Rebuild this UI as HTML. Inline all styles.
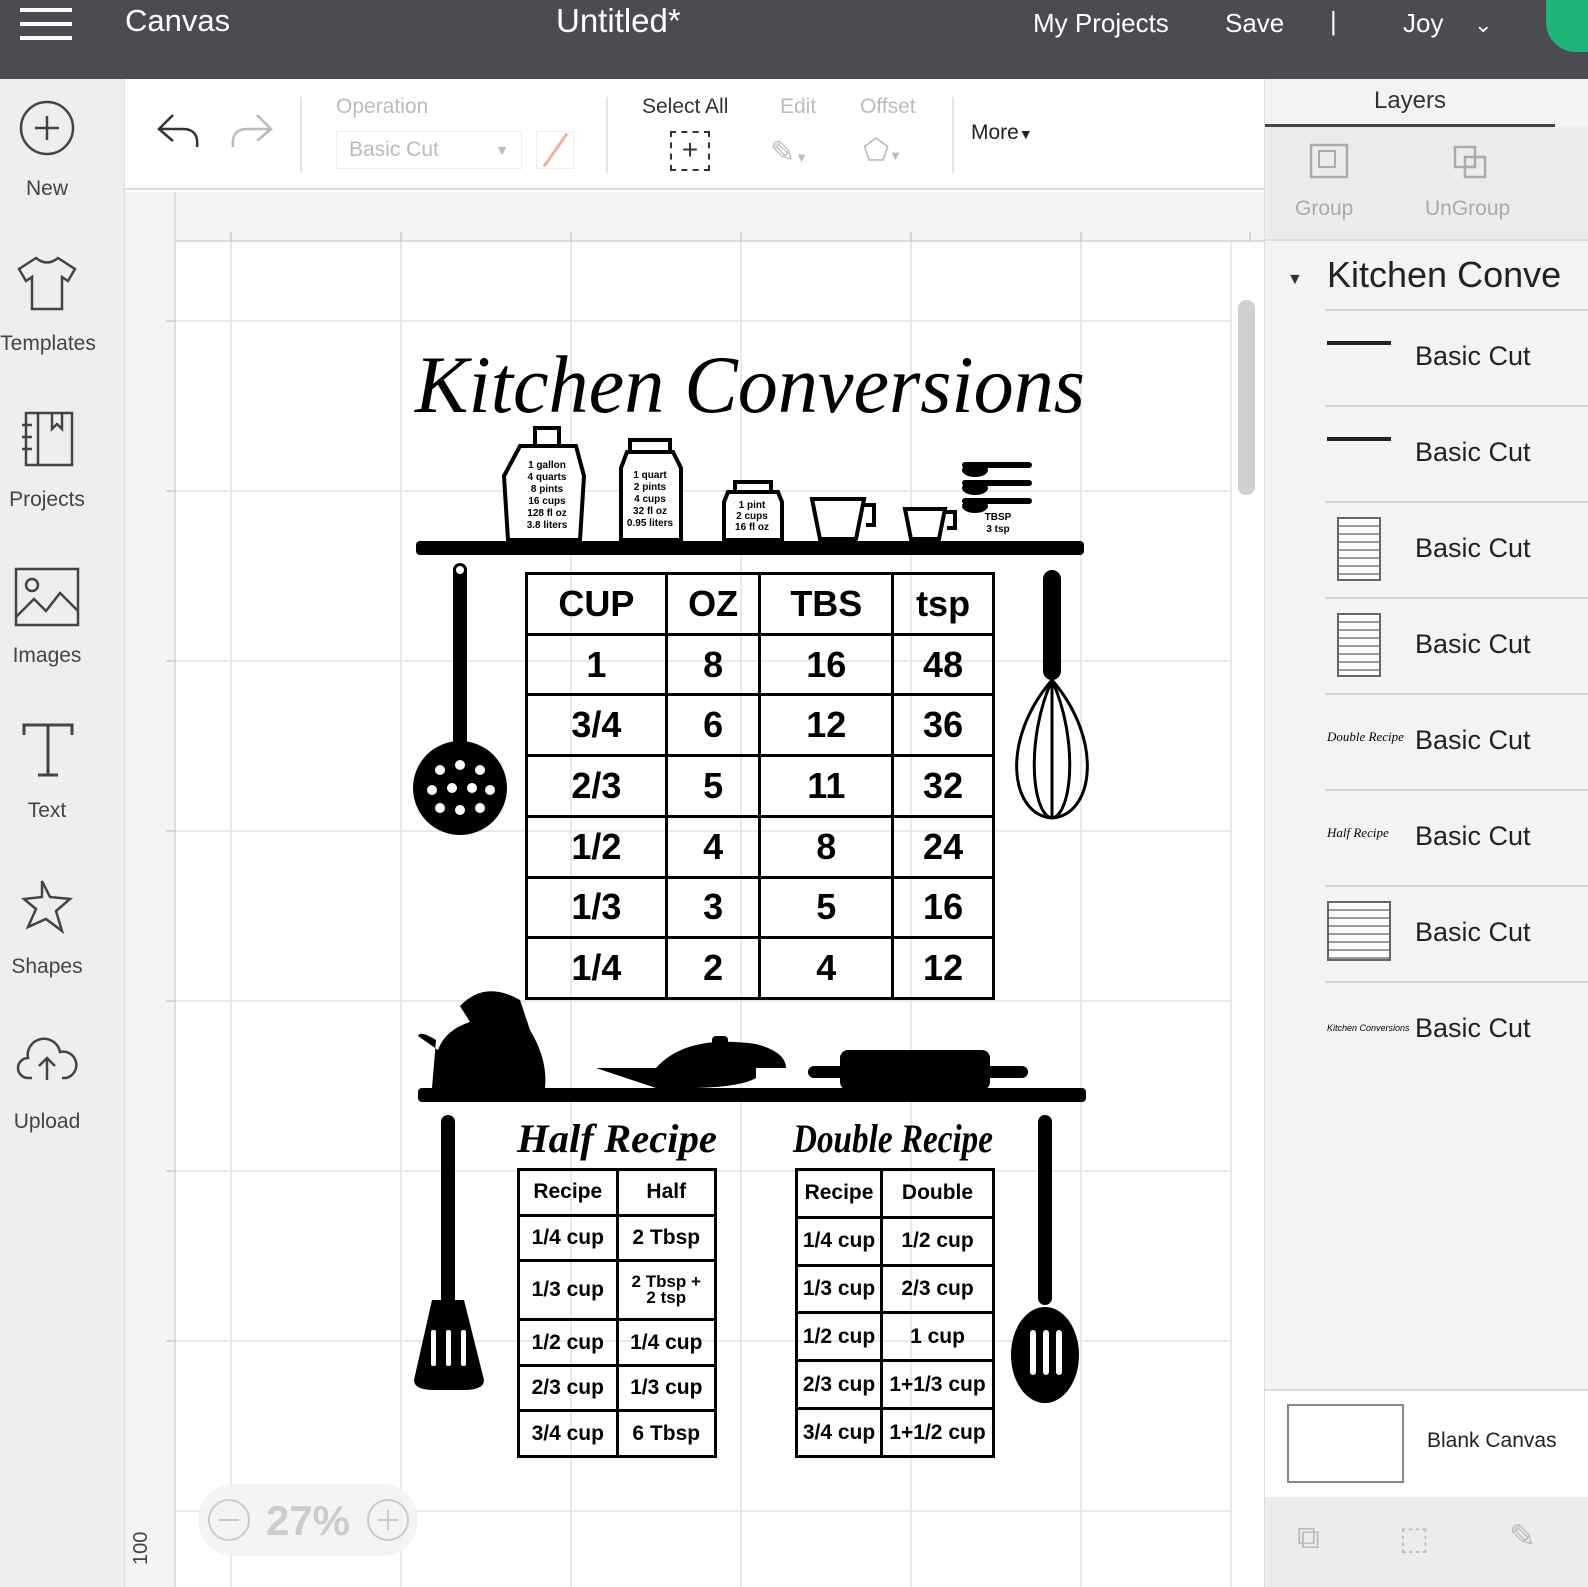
<!DOCTYPE html>
<html><head><meta charset="utf-8"><style>
*{margin:0;padding:0;box-sizing:border-box}
body{width:1588px;height:1587px;overflow:hidden;font-family:"Liberation Sans",sans-serif;background:#fff;position:relative}
.abs{position:absolute}
#top{left:0;top:0;width:1588px;height:79px;background:#4b4c51;color:#fff}
#top div{position:absolute;top:6px;font-size:30px}
#side{left:0;top:79px;width:125px;height:1508px;background:#eeeeef;border-right:1px solid #ddd}
.si{position:absolute;left:0;width:125px;text-align:center;color:#444;font-size:21px}
#tool{left:125px;top:79px;width:1139px;height:111px;background:#fff;border-bottom:2px solid #ddd}
#right{left:1264px;top:79px;width:324px;height:1508px;background:#f3f3f3;border-left:1px solid #ddd}
table{border-collapse:collapse;position:absolute;font-weight:bold;color:#000;text-align:center}
td{border:3px solid #000}
.lay{position:absolute;left:60px;width:264px;height:96px;border-bottom:2px solid #d6d6d6}
.lay span{position:absolute;left:90px;top:30px;font-size:27px;color:#222}
</style></head><body>
<div id="top" class="abs">
 <div style="left:20px;top:8px;width:52px"><div style="position:static;height:4px;background:#fff;margin-bottom:10px"></div><div style="position:static;height:4px;background:#fff;margin-bottom:10px"></div><div style="position:static;height:4px;background:#fff"></div></div>
 <div style="left:125px;top:3px;font-size:31px">Canvas</div>
 <div style="left:556px;top:2px;font-size:33px">Untitled*</div>
 <div style="left:1033px;font-size:26px;top:8px">My Projects</div>
 <div style="left:1225px;font-size:26px;top:8px">Save</div>
 <div style="left:1330px;font-size:26px;top:6px">|</div>
 <div style="left:1403px;font-size:26px;top:8px">Joy</div>
 <div style="left:1474px;top:12px;font-size:22px">&#8964;</div>
 <div style="left:1546px;top:0;width:60px;height:52px;border-radius:0 0 0 30px;background:#1fb57a"></div>
</div>
<div id="side" class="abs">
 <svg class="abs" style="left:18px;top:20px" width="58" height="58"><circle cx="29" cy="29" r="26" fill="none" stroke="#444" stroke-width="2.5"/><path d="M29 17v24M17 29h24" stroke="#444" stroke-width="2.5"/></svg>
 <div class="si" style="top:98px;width:94px">New</div>
 <svg class="abs" style="left:16px;top:176px" width="62" height="58"><path d="M20 3 L3 14 10 26 16 22 16 54 46 54 46 22 52 26 59 14 42 3 Q31 12 20 3Z" fill="none" stroke="#444" stroke-width="2.5"/></svg>
 <div class="si" style="top:253px;width:96px">Templates</div>
 <svg class="abs" style="left:20px;top:332px" width="56" height="56"><rect x="6" y="2" width="46" height="52" fill="none" stroke="#444" stroke-width="2.5"/><path d="M18 2v52M2 14h10M2 26h10M2 38h10M32 2v16l5-5 5 5V2" fill="none" stroke="#444" stroke-width="2.5"/></svg>
 <div class="si" style="top:409px;width:94px">Projects</div>
 <svg class="abs" style="left:14px;top:488px" width="66" height="60"><rect x="2" y="2" width="62" height="56" fill="none" stroke="#444" stroke-width="2.5"/><circle cx="18" cy="18" r="6" fill="none" stroke="#444" stroke-width="2.5"/><path d="M2 50 20 32 32 44 46 26 64 44" fill="none" stroke="#444" stroke-width="2.5"/></svg>
 <div class="si" style="top:565px;width:94px">Images</div>
 <svg class="abs" style="left:20px;top:642px" width="56" height="60"><path d="M4 14V4h48v10M28 4v50M18 54h20" fill="none" stroke="#444" stroke-width="3"/></svg>
 <div class="si" style="top:720px;width:94px">Text</div>
 <svg class="abs" style="left:20px;top:798px" width="56" height="60"><path d="M22 4 30 20 50 22 36 34 42 54 26 42 8 50 16 32 4 22 22 20Z" fill="none" stroke="#444" stroke-width="2.5"/></svg>
 <div class="si" style="top:876px;width:94px">Shapes</div>
 <svg class="abs" style="left:16px;top:955px" width="62" height="50"><path d="M16 44H12A10 10 0 0 1 12 24 16 16 0 0 1 44 18 12 12 0 0 1 50 44H46M31 46V24M23 32l8-8 8 8" fill="none" stroke="#444" stroke-width="2.5"/></svg>
 <div class="si" style="top:1031px;width:94px">Upload</div>
</div>
<div id="tool" class="abs">
 <svg class="abs" style="left:30px;top:32px" width="50" height="40"><path d="M18 4 4 18 18 30M4 18H28Q44 18 42 36" fill="none" stroke="#333" stroke-width="2.5"/></svg>
 <svg class="abs" style="left:100px;top:32px" width="50" height="40"><path d="M32 4 46 18 32 30M46 18H22Q6 18 8 36" fill="none" stroke="#bbb" stroke-width="2.5"/></svg>
 <div class="abs" style="left:175px;top:18px;width:2px;height:76px;background:#e4e4e4"></div>
 <div class="abs" style="left:211px;top:16px;color:#bbb;font-size:21px">Operation</div>
 <div class="abs" style="left:211px;top:52px;width:186px;height:38px;border:1px solid #eee;color:#bbb;font-size:21px;padding:6px 12px">Basic Cut<span style="position:absolute;right:12px;font-size:14px;top:10px">▼</span></div>
 <div class="abs" style="left:411px;top:52px;width:38px;height:38px;border:1px solid #eee"><div style="position:absolute;left:17px;top:-2px;width:3px;height:40px;background:#f0b0a0;transform:rotate(35deg)"></div></div>
 <div class="abs" style="left:481px;top:18px;width:2px;height:76px;background:#e4e4e4"></div>
 <div class="abs" style="left:517px;top:16px;color:#333;font-size:21px">Select All</div>
 <div class="abs" style="left:545px;top:52px;width:40px;height:40px;border:2px dashed #333;text-align:center;font-size:28px;line-height:34px;color:#333">+</div>
 <div class="abs" style="left:655px;top:16px;color:#bbb;font-size:21px">Edit</div>
 <div class="abs" style="left:645px;top:56px;color:#bbb;font-size:30px">✎<span style="font-size:13px">▼</span></div>
 <div class="abs" style="left:735px;top:16px;color:#bbb;font-size:21px">Offset</div>
 <div class="abs" style="left:738px;top:54px;color:#bbb;font-size:30px">⬠<span style="font-size:13px">▼</span></div>
 <div class="abs" style="left:827px;top:18px;width:2px;height:76px;background:#e4e4e4"></div>
 <div class="abs" style="left:846px;top:42px;color:#222;font-size:21px">More<span style="font-size:14px">▼</span></div>
</div>
<div class="abs" style="left:125px;top:192px;width:1139px;height:50px;background:#f4f4f4;border-bottom:2px solid #ddd"></div>
<div class="abs" style="left:125px;top:192px;width:51px;height:1395px;background:#f4f4f4;border-right:2px solid #ddd"></div>
<div class="abs" style="left:130px;font-size:20px;color:#444;transform:rotate(-90deg);transform-origin:left top;top:1565px">100</div>
<svg class="abs" style="left:0;top:0" width="1264" height="1587">
 <g stroke="#e0e0e0" stroke-width="1.5">
  <path d="M231 242V1587M401 242V1587M571 242V1587M741 242V1587M911 242V1587M1081 242V1587M1231 242V1587"/>
  <path d="M176 321H1231M176 491H1231M176 661H1231M176 831H1231M176 1001H1231M176 1171H1231M176 1341H1231M176 1511H1231"/>
 </g>
 <g stroke="#ccc" stroke-width="1.5"><path d="M231 232v10M401 232v10M571 232v10M741 232v10M911 232v10M1081 232v10M1250 232v10M166 321h10M166 491h10M166 661h10M166 831h10M166 1001h10M166 1171h10M166 1341h10"/></g>
 <rect x="1238" y="300" width="17" height="195" rx="8" fill="#d0d0d0"/>
 <rect x="416" y="541" width="668" height="14" rx="4"/>
 <rect x="418" y="1088" width="668" height="14" rx="4"/>
 <g fill="#fff" stroke="#000" stroke-width="4">
  <path d="M535 428h24v18h-24z M520 446h56l8 30-4 64h-72l-4-64z"/>
  <path d="M630 440h40v12h-40z M627 452h46l8 16v72h-60v-72z"/>
  <path d="M735 482h36v10h-36z M728 492h50l4 10v38h-58v-38z"/>
  <path d="M812 499h52l-8 40h-36z M864 505h10v20h-8"/>
  <path d="M905 509h40l-6 30h-28z M945 512h10v16h-8"/>
 </g>
 <g fill="#000"><rect x="962" y="462" width="70" height="6" rx="3"/><rect x="962" y="480" width="70" height="6" rx="3"/><rect x="962" y="498" width="70" height="6" rx="3"/>
  <ellipse cx="975" cy="470" rx="13" ry="7"/><ellipse cx="975" cy="488" rx="13" ry="7"/><ellipse cx="975" cy="506" rx="13" ry="7"/></g>
 <g font-size="10" font-weight="bold" text-anchor="middle" font-family="Liberation Sans">
  <text x="547" y="468">1 gallon</text><text x="547" y="480">4 quarts</text><text x="547" y="492">8 pints</text><text x="547" y="504">16 cups</text><text x="547" y="516">128 fl oz</text><text x="547" y="528">3.8 liters</text>
  <text x="650" y="478">1 quart</text><text x="650" y="490">2 pints</text><text x="650" y="502">4 cups</text><text x="650" y="514">32 fl oz</text><text x="650" y="526">0.95 liters</text>
  <text x="752" y="508">1 pint</text><text x="752" y="519">2 cups</text><text x="752" y="530">16 fl oz</text>
  <text x="998" y="520">TBSP</text><text x="998" y="532">3 tsp</text>
 </g>
 <text x="750" y="412" font-family="Liberation Serif" font-style="italic" font-size="82" text-anchor="middle" textLength="670" lengthAdjust="spacingAndGlyphs">Kitchen Conversions</text>
 <rect x="453" y="563" width="14" height="190" rx="7"/><circle cx="460" cy="788" r="47"/>
 <g fill="#fff"><circle cx="440" cy="770" r="5"/><circle cx="460" cy="765" r="5"/><circle cx="480" cy="770" r="5"/><circle cx="432" cy="790" r="5"/><circle cx="452" cy="788" r="5"/><circle cx="472" cy="788" r="5"/><circle cx="490" cy="790" r="5"/><circle cx="440" cy="808" r="5"/><circle cx="460" cy="810" r="5"/><circle cx="480" cy="808" r="5"/><circle cx="460" cy="570" r="4"/></g>
 <rect x="1043" y="570" width="18" height="110" rx="9"/>
 <g fill="none" stroke="#000" stroke-width="3"><path d="M1052 680C1000 740 1010 815 1052 818C1094 815 1104 740 1052 680Z"/><path d="M1052 680C1025 740 1032 815 1052 818C1072 815 1079 740 1052 680Z"/><path d="M1052 680V818"/></g>
 <path d="M432 1088 L436 1040 Q420 1030 418 1036 L438 1050 Q445 1030 470 1022 L460 1006 Q485 980 520 1000 L530 1030 Q548 1060 545 1088Z"/>
 <path d="M596 1068h60q30-34 100-24 30 8 30 24h-30v10q-20 12-100 10z"/>
 <rect x="712" y="1036" width="16" height="10" rx="4"/>
 <rect x="808" y="1066" width="220" height="12" rx="6"/><rect x="840" y="1050" width="150" height="40" rx="8"/>
 <rect x="441" y="1115" width="14" height="190" rx="7"/><path d="M432 1300h32l20 80q0 10-20 10h-30q-20 0-20-10z"/>
 <g fill="#fff"><rect x="431" y="1330" width="5" height="36" rx="2"/><rect x="446" y="1330" width="5" height="36" rx="2"/><rect x="461" y="1330" width="5" height="36" rx="2"/></g>
 <rect x="1038" y="1115" width="14" height="190" rx="7"/><ellipse cx="1045" cy="1355" rx="34" ry="48"/>
 <g fill="#fff"><rect x="1030" y="1330" width="6" height="45" rx="3"/><rect x="1043" y="1330" width="6" height="45" rx="3"/><rect x="1056" y="1330" width="6" height="45" rx="3"/></g>
 <text x="617" y="1152" font-family="Liberation Serif" font-style="italic" font-weight="bold" font-size="40" text-anchor="middle" textLength="200" lengthAdjust="spacingAndGlyphs">Half Recipe</text>
 <text x="893" y="1152" font-family="Liberation Serif" font-style="italic" font-weight="bold" font-size="40" text-anchor="middle" textLength="200" lengthAdjust="spacingAndGlyphs">Double Recipe</text>
 <rect x="198" y="1484" width="220" height="72" rx="36" fill="#f3f3f3" opacity=".9"/>
 <circle cx="229" cy="1520" r="20" fill="none" stroke="#ccc" stroke-width="2"/><path d="M219 1520h20" stroke="#ccc" stroke-width="2"/>
 <circle cx="388" cy="1520" r="20" fill="none" stroke="#ccc" stroke-width="2"/><path d="M378 1520h20M388 1510v20" stroke="#ccc" stroke-width="2"/>
 <text x="308" y="1535" font-size="42" fill="#ccc" text-anchor="middle" font-family="Liberation Sans" font-weight="bold">27%</text>
</svg>
<table style="left:525px;top:572px;width:470px;height:428px;font-size:36px">
<tr><td>CUP</td><td>OZ</td><td>TBS</td><td>tsp</td></tr>
<tr><td>1</td><td>8</td><td>16</td><td>48</td></tr>
<tr><td>3/4</td><td>6</td><td>12</td><td>36</td></tr>
<tr><td>2/3</td><td>5</td><td>11</td><td>32</td></tr>
<tr><td>1/2</td><td>4</td><td>8</td><td>24</td></tr>
<tr><td>1/3</td><td>3</td><td>5</td><td>16</td></tr>
<tr><td>1/4</td><td>2</td><td>4</td><td>12</td></tr>
</table>
<table style="left:517px;top:1168px;width:200px;height:290px;font-size:21px">
<tr><td>Recipe</td><td>Half</td></tr><tr><td>1/4 cup</td><td>2 Tbsp</td></tr><tr><td>1/3 cup</td><td style="font-size:17px;line-height:16px">2 Tbsp +<br>2 tsp</td></tr><tr><td>1/2 cup</td><td>1/4 cup</td></tr><tr><td>2/3 cup</td><td>1/3 cup</td></tr><tr><td>3/4 cup</td><td>6 Tbsp</td></tr>
</table>
<table style="left:795px;top:1168px;width:200px;height:290px;font-size:21px">
<tr><td>Recipe</td><td>Double</td></tr><tr><td>1/4 cup</td><td>1/2 cup</td></tr><tr><td>1/3 cup</td><td>2/3 cup</td></tr><tr><td>1/2 cup</td><td>1 cup</td></tr><tr><td>2/3 cup</td><td>1+1/3 cup</td></tr><tr><td>3/4 cup</td><td>1+1/2 cup</td></tr>
</table>
<div id="right" class="abs">
 <div class="abs" style="left:0;top:0;width:290px;height:48px;border-bottom:3px solid #444;text-align:center;font-size:24px;color:#333;padding-top:8px">Layers</div>
 <div class="abs" style="left:0;top:48px;width:324px;height:114px;background:#ececec;border-bottom:2px solid #ddd"></div>
 <svg class="abs" style="left:42px;top:62px" width="44" height="40"><rect x="4" y="4" width="36" height="32" fill="none" stroke="#aaa" stroke-width="2.5"/><rect x="12" y="10" width="16" height="16" fill="none" stroke="#aaa" stroke-width="2"/></svg>
 <div class="abs" style="left:30px;top:118px;font-size:21px;color:#aaa">Group</div>
 <svg class="abs" style="left:186px;top:64px" width="40" height="40"><rect x="4" y="4" width="20" height="20" fill="none" stroke="#aaa" stroke-width="2.5"/><rect x="14" y="14" width="20" height="20" fill="none" stroke="#aaa" stroke-width="2.5"/></svg>
 <div class="abs" style="left:160px;top:118px;font-size:21px;color:#aaa">UnGroup</div>
 <div class="abs" style="left:22px;top:192px;font-size:16px;color:#333">▼</div>
 <div class="abs" style="left:62px;top:175px;font-size:36px;color:#222;white-space:nowrap">Kitchen Conve</div>
 <div class="abs" style="left:60px;top:230px;width:264px;height:2px;background:#d6d6d6"></div>
 <div class="lay" style="top:232px"><span>Basic Cut</span><div style="position:absolute;left:2px;top:30px;width:64px;height:4px;background:#222"></div></div>
 <div class="lay" style="top:328px"><span>Basic Cut</span><div style="position:absolute;left:2px;top:30px;width:64px;height:4px;background:#222"></div></div>
 <div class="lay" style="top:424px"><span>Basic Cut</span><div style="position:absolute;left:12px;top:14px;width:44px;height:64px;border:2px solid #666;background:repeating-linear-gradient(#fff 0 6px,#999 6px 8px)"></div></div>
 <div class="lay" style="top:520px"><span>Basic Cut</span><div style="position:absolute;left:12px;top:14px;width:44px;height:64px;border:2px solid #666;background:repeating-linear-gradient(#fff 0 6px,#999 6px 8px)"></div></div>
 <div class="lay" style="top:616px"><span>Basic Cut</span><div style="position:absolute;left:2px;top:34px;font-size:13px;font-style:italic;font-family:'Liberation Serif'">Double Recipe</div></div>
 <div class="lay" style="top:712px"><span>Basic Cut</span><div style="position:absolute;left:2px;top:34px;font-size:13px;font-style:italic;font-family:'Liberation Serif'">Half Recipe</div></div>
 <div class="lay" style="top:808px"><span>Basic Cut</span><div style="position:absolute;left:2px;top:14px;width:64px;height:60px;border:2px solid #666;background:repeating-linear-gradient(#fff 0 6px,#999 6px 8px)"></div></div>
 <div class="lay" style="top:904px;border:none"><span>Basic Cut</span><div style="position:absolute;left:2px;top:40px;font-size:9px;font-style:italic">Kitchen Conversions</div></div>
 <div class="abs" style="left:0;top:1310px;width:324px;height:108px;background:#fff;border-top:2px solid #ddd"></div>
 <div class="abs" style="left:22px;top:1325px;width:117px;height:79px;border:2px solid #888;background:#fff"></div>
 <div class="abs" style="left:162px;top:1350px;font-size:21px;color:#222">Blank Canvas</div>
 <div class="abs" style="left:0;top:1418px;width:324px;height:90px;background:#ececec"></div>
 <div class="abs" style="left:32px;top:1440px;font-size:32px;color:#bbb">⧉</div>
 <div class="abs" style="left:134px;top:1440px;font-size:32px;color:#bbb">⬚</div>
 <div class="abs" style="left:244px;top:1438px;font-size:32px;color:#bbb">✎</div>
</div>
</body></html>
